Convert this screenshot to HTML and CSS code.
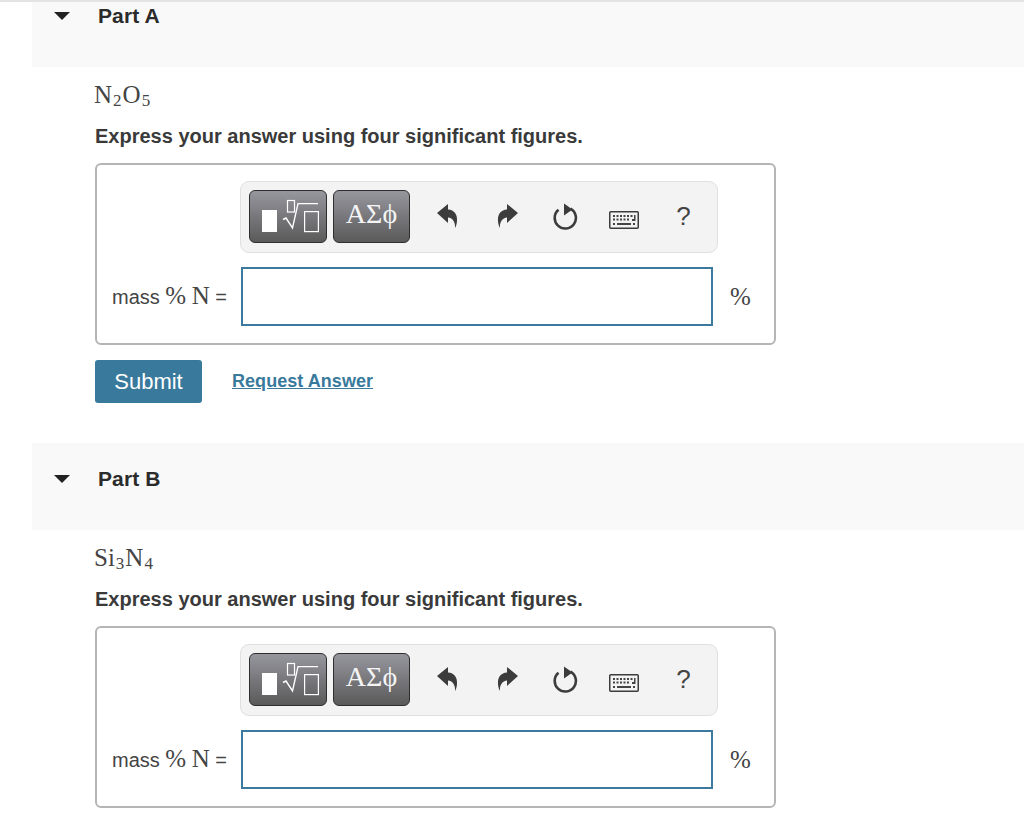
FILE: index.html
```html
<!DOCTYPE html>
<html lang="en">
<head>
<meta charset="utf-8">
<title>Part A and Part B</title>
<link rel="stylesheet" href="styles.css">
</head>
<body>
<svg class="defs" width="0" height="0" aria-hidden="true">
  <symbol id="i-undo" viewBox="0 0 22 24"><path d="M0 9 11 0v5.500c6.500.5 9.500 5 9 11.500-.2 3-1 5.500-2 7 .5-5.500-2-10-7-10.500V19z"/></symbol>
  <symbol id="i-reset" viewBox="0 0 25 27"><path d="M5.500 6.800A10.600 10.600 0 1 0 17.500 5.700" fill="none" stroke="currentColor" stroke-width="2.600"/><path d="M11 0.500l8.500 6-8.500 6z"/></symbol>
  <symbol id="i-keys" viewBox="0 0 30 18">
    <rect x=".75" y=".75" width="28.500" height="16.500" rx="1" fill="#f3f3f3" stroke="currentColor" stroke-width="1.500"/>
    <path d="M4 4h2v2H4zM7.500 4h2v2h-2zM11 4h2v2h-2zM14.500 4h2v2h-2zM18 4h2v2h-2zM21.500 4h2v2h-2zM25 4h1.500v6H23V8h2zM4 7.500h2v2H4zM7.500 7.500h2v2h-2zM11 7.500h2v2h-2zM14.500 7.500h2v2h-2zM18 7.500h2v2h-2zM4 12h2v2H4zM8 12h14v2H8zM24 12h2v2h-2z"/>
  </symbol>
  <symbol id="i-templates" viewBox="0 0 76 51">
    <rect x="12" y="19" width="15" height="22" fill="#fff"/>
    <g fill="none" stroke="#fff">
      <rect x="37.500" y="9.500" width="7" height="11.500" stroke-width="1.200"/>
      <rect x="54.600" y="20.600" width="13.800" height="20" stroke-width="1.200"/>
      <path d="M33 28.500l3-1.500 6.500 10L48 12.600h20" stroke-width="1.400"/>
    </g>
  </symbol>
</svg>

<main class="page">
  <section class="part">
    <header class="part-head part-head-cut">
      <span class="caret"></span>
      <h2 class="part-title">Part A</h2>
    </header>
    <div class="part-body">
      <p class="formula">N<sub>2</sub><span class="gap">O</span><sub>5</sub></p>
      <p class="hint">Express your answer using four significant figures.</p>
      <div class="answer">
        <div class="toolbar">
          <button class="math-btn" type="button" aria-label="Templates"><svg class="tpl"><use href="#i-templates"/></svg></button>
          <button class="math-btn greek" type="button">ΑΣϕ</button>
          <div class="tools">
            <span class="tool"><svg class="arrow"><use href="#i-undo"/></svg></span>
            <span class="tool"><svg class="arrow flip"><use href="#i-undo"/></svg></span>
            <span class="tool"><svg class="reset"><use href="#i-reset"/></svg></span>
            <span class="tool"><svg class="keys"><use href="#i-keys"/></svg></span>
            <span class="tool help">?</span>
          </div>
        </div>
        <div class="entry">
          <label class="entry-label">mass <span class="serif">%</span> <span class="serif">N</span> =</label>
          <input class="entry-input" type="text">
          <span class="serif unit">%</span>
        </div>
      </div>
      <div class="actions">
        <button class="submit" type="button">Submit</button>
        <a class="request" href="#">Request Answer</a>
      </div>
    </div>
  </section>

  <section class="part">
    <header class="part-head">
      <span class="caret"></span>
      <h2 class="part-title">Part B</h2>
    </header>
    <div class="part-body">
      <p class="formula">Si<sub>3</sub><span class="gap">N</span><sub>4</sub></p>
      <p class="hint">Express your answer using four significant figures.</p>
      <div class="answer">
        <div class="toolbar">
          <button class="math-btn" type="button" aria-label="Templates"><svg class="tpl"><use href="#i-templates"/></svg></button>
          <button class="math-btn greek" type="button">ΑΣϕ</button>
          <div class="tools">
            <span class="tool"><svg class="arrow"><use href="#i-undo"/></svg></span>
            <span class="tool"><svg class="arrow flip"><use href="#i-undo"/></svg></span>
            <span class="tool"><svg class="reset"><use href="#i-reset"/></svg></span>
            <span class="tool"><svg class="keys"><use href="#i-keys"/></svg></span>
            <span class="tool help">?</span>
          </div>
        </div>
        <div class="entry">
          <label class="entry-label">mass <span class="serif">%</span> <span class="serif">N</span> =</label>
          <input class="entry-input" type="text">
          <span class="serif unit">%</span>
        </div>
      </div>
    </div>
  </section>
</main>
</body>
</html>
```

FILE: styles.css
```css
* { box-sizing: border-box; }

html, body {
  margin: 0;
  height: 815px;
  overflow: hidden;
  background: #fff;
}

body {
  font-family: "Liberation Sans", Arial, sans-serif;
  color: #333;
  border-top: 2px solid #e4e4e4;
}

.defs { display: block; height: 0; }

.page { padding-left: 32px; }

.part-head {
  display: flex;
  align-items: flex-start;
  height: 87px;
  padding-top: 25px;
  background: #f9f9f9;
}

.part-head-cut {
  height: 65px;
  padding-top: 3px;
}

.caret {
  flex: none;
  width: 0;
  height: 0;
  margin: 7px 0 0 22px;
  border-style: solid;
  border-width: 8px 8px 0;
  border-color: #222 transparent transparent;
}

.part-title {
  margin: 0 0 0 28px;
  font-size: 21px;
  line-height: 21px;
  font-weight: 700;
  letter-spacing: .1px;
  color: #2b2b2b;
}

.part-body { padding: 13px 0 40px 63px; }

.formula {
  margin: 0 0 0 -1px;
  height: 29px;
  font-family: "Liberation Serif", "Times New Roman", serif;
  font-size: 25px;
  line-height: 29px;
  color: #444;
}

.formula sub {
  margin-left: 1px;
  font-size: 17px;
  line-height: 0;
  vertical-align: -3px;
}

.gap { margin-left: 1px; }

.hint {
  margin: 15px 0 0;
  font-size: 20px;
  line-height: 24px;
  font-weight: 700;
  color: #3a3a3a;
}

.answer {
  width: 681px;
  height: 182px;
  margin-top: 15px;
  padding: 16px 0 0 143px;
  border: 2px solid #b5b5b5;
  border-radius: 6px;
}

.toolbar {
  display: flex;
  align-items: center;
  width: 478px;
  height: 72px;
  padding-left: 8px;
  background: #f3f3f3;
  border: 1px solid #e0e0e0;
  border-radius: 9px;
}

.math-btn {
  flex: none;
  display: flex;
  align-items: center;
  justify-content: center;
  width: 78px;
  height: 53px;
  margin: -2px 6px 0 0;
  padding: 0;
  border: 1px solid #2e2e2e;
  border-radius: 6px;
  background: linear-gradient(#96969e, #5a5a5a);
}

.greek {
  width: 77px;
  margin-right: 5px;
  padding-bottom: 4px;
  font-family: "Liberation Serif", "Times New Roman", serif;
  font-size: 28px;
  color: #f4f4f4;
}

.tpl { width: 76px; height: 51px; }

.tools {
  display: flex;
  margin: -2px 0 0 3px;
}

.tool {
  display: flex;
  align-items: center;
  justify-content: center;
  width: 59px;
  height: 44px;
  color: #3c3c3c;
}

.arrow { width: 22px; height: 24px; fill: #3c3c3c; }

.flip { transform: scaleX(-1); }

.reset { width: 25px; height: 27px; fill: #3c3c3c; }

.keys { width: 30px; height: 18px; fill: #444; margin: 7px 2px 0 0; }

.help {
  font-size: 26px;
  color: #444;
}

.entry {
  display: flex;
  align-items: center;
  margin: 13px 0 0 -143px;
  padding-left: 15px;
}

.entry-label {
  flex: none;
  width: 129px;
  font-size: 20px;
  line-height: 59px;
  color: #444;
}

.serif {
  font-family: "Liberation Serif", "Times New Roman", serif;
  font-size: 25px;
}

.entry-input {
  flex: none;
  width: 472px;
  height: 59px;
  padding: 0;
  border: 2px solid #3b7a9e;
  background: #fff;
}

.unit {
  margin-left: 17px;
  color: #444;
}

.actions {
  display: flex;
  align-items: center;
  margin-top: 15px;
}

.submit {
  width: 107px;
  height: 43px;
  padding: 0;
  border: 0;
  border-radius: 3px;
  background: #38799c;
  color: #fff;
  font-family: inherit;
  font-size: 22px;
}

.request {
  margin-left: 30px;
  font-size: 18px;
  font-weight: 700;
  letter-spacing: .05px;
  color: #38799c;
  text-decoration: underline;
}
```
